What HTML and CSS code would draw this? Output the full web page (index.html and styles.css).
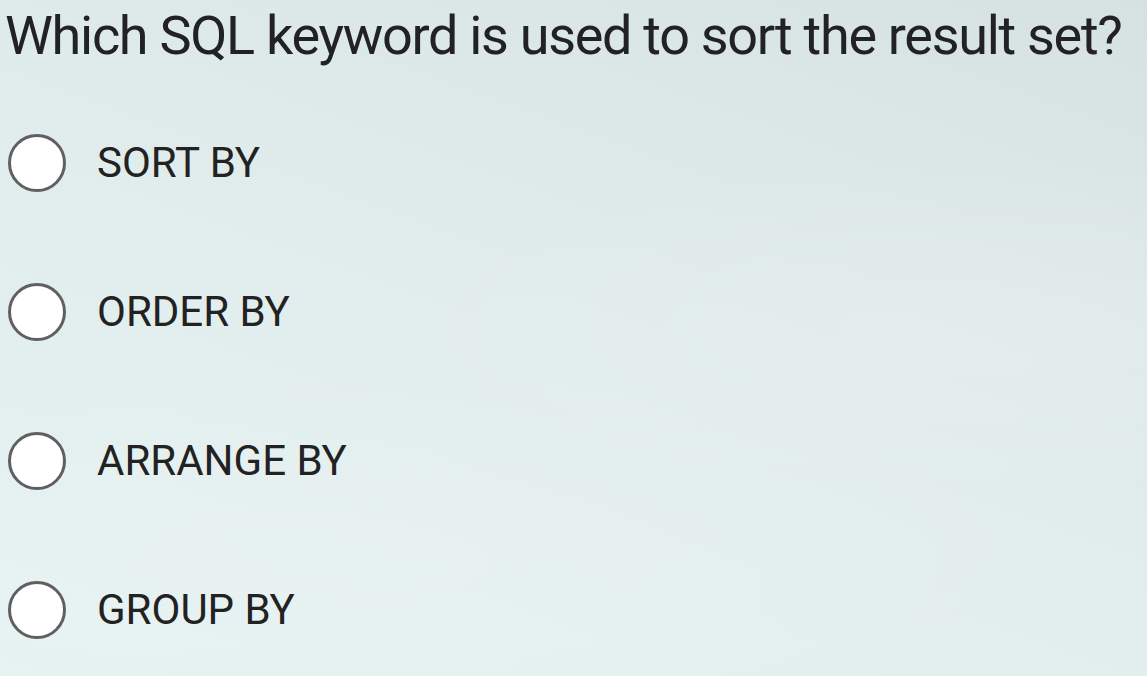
FILE: index.html
```html
<!DOCTYPE html>
<html lang="en">
<head>
<meta charset="utf-8">
<title>Quiz</title>
<link rel="stylesheet" href="styles.css">
</head>
<body>
<main class="quiz">
  <h1 class="question">Which SQL keyword is used to sort the result set?</h1>
  <ul class="options">
    <li class="option"><span class="radio"></span><span class="label">SORT BY</span></li>
    <li class="option"><span class="radio"></span><span class="label">ORDER BY</span></li>
    <li class="option"><span class="radio"></span><span class="label">ARRANGE BY</span></li>
    <li class="option"><span class="radio"></span><span class="label">GROUP BY</span></li>
  </ul>
</main>
</body>
</html>
```

FILE: styles.css
```css
html, body {
  margin: 0;
  padding: 0;
  width: 1147px;
  height: 676px;
  overflow: hidden;
}
body {
  font-family: Roboto, "Liberation Sans", sans-serif;
  color: #222222;
  background:
    radial-gradient(ellipse 900px 260px at 1000px 330px, rgba(255,255,255,0.16), rgba(255,255,255,0) 70%),
    radial-gradient(ellipse 1200px 300px at 300px 560px, rgba(255,255,255,0.12), rgba(255,255,255,0) 70%),
    linear-gradient(200deg, #d6e1e1 0%, #dce7e7 25%, #e2eded 55%, #e6f2f2 100%);
}
.quiz {
  display: flex;
  flex-direction: column;
}
.question {
  margin: 0;
  padding: 4px 0 0 5px;
  height: 88px;
  box-sizing: border-box;
  font-size: 54px;
  font-weight: 400;
  line-height: 64px;
  letter-spacing: -1.3px;
  white-space: nowrap;
}
.options {
  list-style: none;
  margin: 0;
  padding: 0;
  display: flex;
  flex-direction: column;
}
.option {
  height: 149px;
  display: flex;
  align-items: center;
  gap: 31px;
  padding-left: 8px;
}
.radio {
  width: 58px;
  height: 58px;
  box-sizing: border-box;
  border: 3px solid #606060;
  border-radius: 50%;
  background: #ffffff;
  flex: none;
}
.label {
  font-size: 42px;
  line-height: 50px;
  color: #222222;
}
```
